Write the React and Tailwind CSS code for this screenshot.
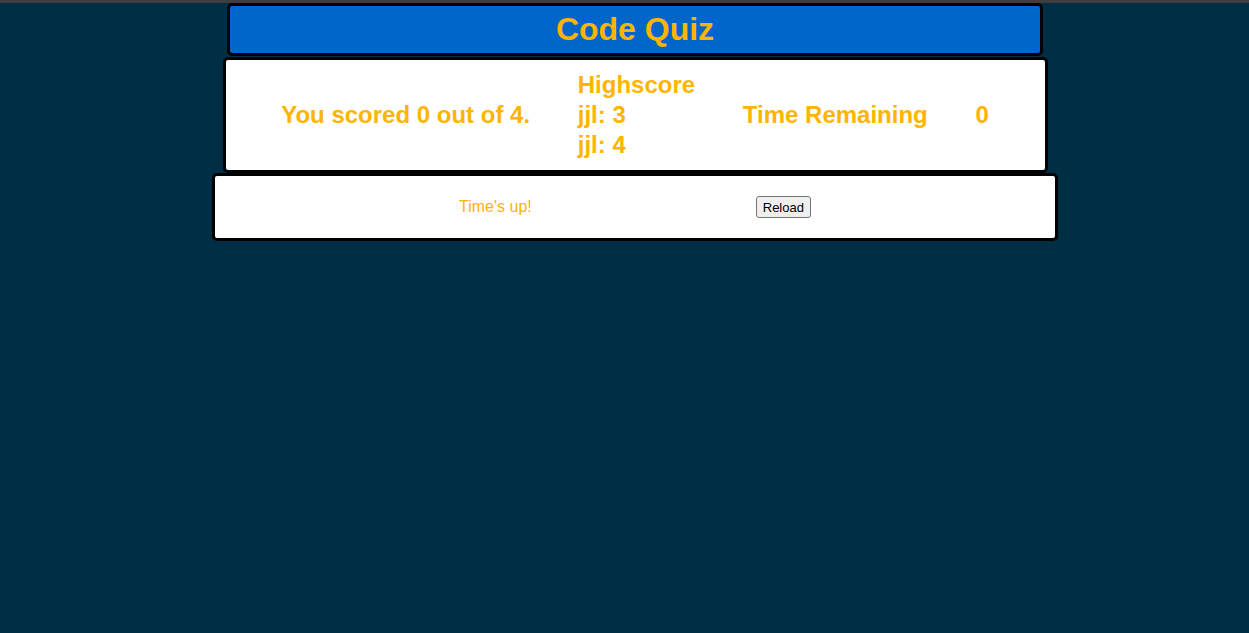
export default function App() {
  const scores = ['jjl: 3', 'jjl: 4'];

  return (
    <div
      className="min-h-screen bg-[#002f45] text-[#ffb400]"
      style={{ fontFamily: '"Liberation Sans", Arial, sans-serif' }}
    >
      <div className="h-[3px] bg-[#3d3d3d]" />

      <div className="pl-[21px]">
        <header className="mx-auto w-[816px] rounded-[5px] border-[3px] border-black bg-[#0066cc] py-[4px] text-center">
          <h1 className="text-[32px] font-bold leading-[39px]">Code Quiz</h1>
        </header>

        <section className="mx-auto mt-[1px] flex w-[825px] items-center justify-evenly rounded-[5px] border-[3px] border-black bg-white px-[8px] py-[10px] text-[24px] font-bold leading-[30px]">
          <p>You scored 0 out of 4.</p>
          <div>
            <p>Highscore</p>
            {scores.map((s, i) => (
              <p key={i}>{s}</p>
            ))}
          </div>
          <p>Time Remaining</p>
          <p>0</p>
        </section>

        <section className="mx-auto flex h-[68px] w-[846px] items-center justify-center gap-[224px] rounded-[5px] border-[3px] border-black bg-white">
          <p className="text-[16px] font-light">Time's up!</p>
          <button
            type="button"
            className="h-[22px] rounded-[3px] border border-[#767676] bg-[#efefef] px-[6px] text-[13px] leading-none text-black"
            style={{ fontFamily: '"Liberation Sans", Arial, sans-serif' }}
          >
            Reload
          </button>
        </section>
      </div>
    </div>
  );
}
